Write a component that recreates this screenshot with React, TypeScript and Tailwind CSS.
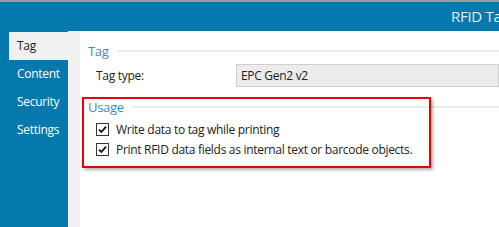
import React from 'react';

const font = { fontFamily: '"Open Sans", "Noto Sans", sans-serif' };

const tabs = ['Tag', 'Content', 'Security', 'Settings'];

const CheckBox: React.FC = () => (
  <div className="flex h-[13px] w-[13px] shrink-0 items-center justify-center border border-[#333333] bg-white">
    <svg width="9" height="9" viewBox="0 0 9 9">
      <path d="M1 4.6 L3.4 7 L8 1.6" fill="none" stroke="#111111" strokeWidth="1.8" />
    </svg>
  </div>
);

const GroupTitle: React.FC<{ label: string }> = ({ label }) => (
  <div className="flex items-center gap-[8px] pl-[8px]">
    <span className="text-[13px] leading-[16px] tracking-[-0.3px] text-[#3a8dca]">{label}</span>
    <div className="h-[2px] flex-1 bg-[#ebebeb]" />
  </div>
);

export default function App() {
  return (
    <div className="h-[227px] w-[499px] overflow-hidden bg-white" style={font}>
      <div className="h-[2px] bg-[#9c9c9c]" />
      <div className="flex h-[29px] items-center overflow-hidden whitespace-nowrap bg-[#0579ad] pl-[451px] text-[15px] tracking-[-0.3px] text-[#e4eff6]">
        RFID Tag
      </div>
      <div className="flex h-[196px]">
        {/* sidebar */}
        <div className="flex w-[68px] flex-col bg-[#0579ad] pt-[1px]">
          {tabs.map((t, i) => (
            <div
              key={t}
              className={
                i === 0
                  ? 'ml-[9px] flex h-[28px] items-center bg-[#f1f1f1] pl-[8px] text-[12px] tracking-[-0.3px] text-[#222222]'
                  : 'flex h-[28px] items-center pl-[17px] text-[12px] tracking-[-0.3px] text-white'
              }
            >
              {t}
            </div>
          ))}
        </div>
        <div className="w-[12px] bg-[#f1f1f1]" />

        {/* content */}
        <div className="relative flex-1 bg-white pt-[12px] text-[12px] tracking-[-0.3px] text-[#222222]">
          <GroupTitle label="Tag" />
          <div className="mt-[5px] flex h-[23px] items-center">
            <span className="w-[156px] pl-[16px]">Tag type:</span>
            <div className="flex h-[23px] flex-1 items-center border border-[#cfcfcf] bg-[#ececec] pl-[4px]">
              EPC Gen2 v2
            </div>
          </div>

          <div className="mt-[12px]">
            <GroupTitle label="Usage" />
            <div className="mt-[8px] flex flex-col gap-[7px] pl-[16px]">
              <div className="flex items-center gap-[7px] leading-[13px]">
                <CheckBox />
                <span>Write data to tag while printing</span>
              </div>
              <div className="flex items-center gap-[7px] leading-[13px]">
                <CheckBox />
                <span>Print RFID data fields as internal text or barcode objects.</span>
              </div>
            </div>
          </div>

          {/* red highlight annotation */}
          <div className="pointer-events-none absolute left-[2px] top-[66px] h-[71px] w-[349px] border-2 border-[#ee0000] shadow-[2px_2px_3px_rgba(0,0,0,0.3)]" />
        </div>
      </div>
    </div>
  );
}
